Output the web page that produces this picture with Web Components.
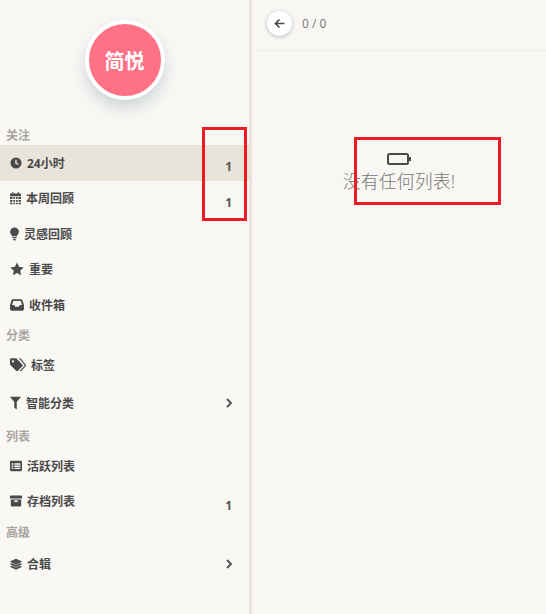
<!DOCTYPE html>
<html lang="zh">
<head>
<meta charset="utf-8">
<title>简悦</title>
<style>
  html, body { margin: 0; height: 100%; }
  body {
    background: #faf8f5;
    font-family: "Open Sans", "Noto Sans CJK SC", sans-serif;
    overflow: hidden;
  }
</style>
</head>
<body>
<app-shell>
  <side-nav slot="side">
    <logo-badge>简悦</logo-badge>
    <nav-label>关注</nav-label>
    <nav-item icon="clock" count="1" active>24小时</nav-item>
    <nav-item icon="calendar" count="1">本周回顾</nav-item>
    <nav-item icon="bulb">灵感回顾</nav-item>
    <nav-item icon="star">重要</nav-item>
    <nav-item icon="inbox">收件箱</nav-item>
    <nav-label style="margin-top:2.5px">分类</nav-label>
    <nav-item icon="tags" style="margin-top:2px">标签</nav-item>
    <nav-item icon="filter" arrow style="margin-top:3px">智能分类</nav-item>
    <nav-label style="margin-top:5px">列表</nav-label>
    <nav-item icon="list" style="margin-top:2px">活跃列表</nav-item>
    <nav-item icon="archive" count="1">存档列表</nav-item>
    <nav-label style="margin-top:3px">高级</nav-label>
    <nav-item icon="layers" arrow style="margin-top:4px">合辑</nav-item>
  </side-nav>
  <top-bar>0 / 0</top-bar>
  <empty-state>没有任何列表!</empty-state>
</app-shell>
<mark-box style="left:202px;top:127px;width:45px;height:94px"></mark-box>
<mark-box style="left:354px;top:137px;width:147px;height:68px"></mark-box>

<script>
const ICONS = {
  clock: { w: 12, vb: '0 0 16 16', d: 'M8 .6a7.4 7.4 0 1 0 0 14.8A7.4 7.4 0 0 0 8 .6zM7 3.6h1.9v4l2.7 1.7-1 1.5L7 8.6z' },
  calendar: { w: 11, vb: '0 0 13 15', d: 'M0 2.2h2.4V.6h1.6v1.6h5V.6h1.6v1.6H13v3.2H0zM0 6.4h3v2.4H0zM4 6.4h2v2.4H4zM7 6.4h2v2.4H7zM10 6.4h3v2.4h-3zM0 9.8h3v2.2H0zM4 9.8h2V12H4zM7 9.8h2V12H7zM10 9.8h3V12h-3zM0 13h3v2H1a1 1 0 0 1-1-1zM4 13h2v2H4zM7 13h2v2H7zM10 13h3v1a1 1 0 0 1-1 1h-2z' },
  bulb: { w: 9, vb: '0 0 11 16', d: 'M5.5 0a5.4 5.4 0 0 0-5.4 5.4c0 2.2 1.8 3.4 2.4 5.4h6c.6-2 2.4-3.2 2.4-5.4A5.4 5.4 0 0 0 5.5 0zM3 11.8h5v1.4H3zM3.6 14h3.8L6.4 16H4.6z' },
  star: { w: 14, vb: '0 0 16 16', d: 'M8 .6l2.3 4.9 5.3.7-3.9 3.7 1 5.3L8 12.7l-4.7 2.5 1-5.3L.4 6.2l5.3-.7z' },
  inbox: { w: 14, vb: '0 0 16 13', d: 'M3.2 0h9.6c.6 0 1 .3 1.3.8L16 6.6V11c0 1.1-.9 2-2 2H2c-1.100 0-2-.9-2-2V6.600L1.900.8C2.200.3 2.600 0 3.200 0zM3.800 2L2.300 6.500H5l1 2h4l1-2h2.700L12.200 2z' },
  tags: { w: 16, vb: '0 0 18 15', d: 'M0 1.400C0 .6.600 0 1.400 0h5c.5 0 .9.200 1.200.5l6.300 6.300c.6.600.6 1.500 0 2.100l-5 5c-.6.600-1.500.600-2.100 0L.5 7.600C.2 7.300 0 6.900 0 6.400zM3.400 2.200a1.300 1.300 0 1 0 0 2.600 1.300 1.300 0 0 0 0-2.600zM10 0h1.300c.4 0 .8.200 1.100.5l5.200 6.300c.6.600.6 1.500 0 2.100l-4.700 5c-.6.600-1.400.600-2 .1l5-5.200c.6-.6.600-1.500 0-2.100z' },
  filter: { w: 11, vb: '0 0 13 15', d: 'M.2 0h12.600c.2 0 .3.300.1.500L8 6v8.600c0 .3-.3.500-.6.300L5.200 13c-.1-.1-.2-.2-.2-.4V6L.1.500C-.1.300 0 0 .2 0z' },
  list: { w: 12, vb: '0 0 15 13', d: 'M1.500 0h12c.8 0 1.500.7 1.500 1.500v10c0 .8-.7 1.500-1.500 1.500h-12C.7 13 0 12.300 0 11.500v-10C0 .7.700 0 1.500 0zM2 3v1.800h2.200V3zM5.500 3v1.800H13V3zM2 5.800v1.800h2.200V5.800zM5.500 5.800v1.800H13V5.800zM2 8.600v1.800h2.200V8.600zM5.500 8.600v1.800H13V8.600z' },
  archive: { w: 12, vb: '0 0 15 14', d: 'M.7 0h13.600c.4 0 .7.300.7.700v2.600c0 .4-.3.700-.7.700H.7C.3 4 0 3.700 0 3.300V.7C0 .3.300 0 .7 0zM1 5h13v8c0 .6-.4 1-1 1H2c-.6 0-1-.4-1-1zM5.800 6.500c-.3 0-.5.200-.5.500v.6c0 .3.200.5.500.5h3.400c.3 0 .5-.2.500-.5V7c0-.3-.2-.5-.5-.5z' },
  layers: { w: 12, vb: '0 0 16 14', d: 'M8 0l7.500 3.400c.4.200.4.700 0 .9L8 7.700.5 4.300c-.4-.2-.4-.7 0-.9zM2.400 5.900L8 8.400l5.600-2.500 1.900.9c.4.200.4.700 0 .9L8 11.100.5 7.700c-.4-.2-.4-.7 0-.9zM2.400 9.300L8 11.800l5.600-2.500 1.900.9c.4.200.4.700 0 .9L8 14.500.5 11.100c-.4-.2-.4-.7 0-.9z' }
};

// frame for everything else, nav on the left
class AppShell extends HTMLElement {
  constructor() {
    super();
    this.attachShadow({ mode: 'open' }).innerHTML = `
      <style>
        :host { display: flex; height: 614px; background: #f9f7f4; }
        .side { flex: 0 0 249px; background: #faf8f5; border-right: 3px solid #e8e4da; }
        .main { flex: 1; min-width: 0; display: flex; flex-direction: column; }
      </style>
      <div class="side"><slot name="side"></slot></div>
      <div class="main"><slot></slot></div>`;
  }
}

class SideNav extends HTMLElement {
  constructor() {
    super();
    this.attachShadow({ mode: 'open' }).innerHTML = `
      <style>
        :host { display: flex; flex-direction: column; color: #4a4a4a; }
      </style>
      <slot></slot>`;
  }
}

class LogoBadge extends HTMLElement {
  constructor() {
    super();
    this.attachShadow({ mode: 'open' }).innerHTML = `
      <style>
        :host { display: flex; justify-content: center; height: 125px; padding-top: 20px; box-sizing: border-box; }
        .disc {
          width: 80px; height: 80px; box-sizing: border-box;
          display: flex; align-items: center; justify-content: center;
          border: 4px solid #fff; border-radius: 50%;
          background: #ff7285; color: #fff;
          font: 700 20px "Noto Sans CJK SC", sans-serif;
          box-shadow: 0 8px 16px rgba(120,145,160,.35);
        }
      </style>
      <div class="disc"><slot></slot></div>`;
  }
}

class NavLabel extends HTMLElement {
  constructor() {
    super();
    this.attachShadow({ mode: 'open' }).innerHTML = `
      <style>
        :host {
          display: flex; align-items: center; height: 20px; padding-left: 6px;
          font: 700 12px "Open Sans", "Noto Sans CJK SC", sans-serif; color: #a8a59f;
        }
      </style>
      <slot></slot>`;
  }
}

class NavItem extends HTMLElement {
  constructor() {
    super();
    const icon = ICONS[this.getAttribute('icon')];
    const count = this.getAttribute('count');
    this.attachShadow({ mode: 'open' }).innerHTML = `
      <style>
        :host {
          display: flex; align-items: center; height: 35.5px; padding: 0 16px 0 10px;
          font: 700 12px "Open Sans", "Noto Sans CJK SC", sans-serif; color: #4a4a4a;
        }
        :host([active]) { background: #e8e4da; }
        svg.icon { flex: none; margin-right: 5px; fill: currentColor; }
        .text { flex: 1; }
        .count { position: relative; top: 4px; margin-right: 1px; font: 700 12px "Open Sans", sans-serif; color: #555; }
        .arrow { width: 8px; height: 10px; fill: none; stroke: #555; stroke-width: 2; }
      </style>
      <svg class="icon" width="${icon.w}" height="14" viewBox="${icon.vb}"><path fill-rule="evenodd" d="${icon.d}"/></svg>
      <span class="text"><slot></slot></span>
      ${count ? `<span class="count">${count}</span>` : ''}
      ${this.hasAttribute('arrow') ? '<svg class="arrow" viewBox="0 0 8 10"><path d="M2 1l4 4-4 4"/></svg>' : ''}`;
  }
}

class TopBar extends HTMLElement {
  constructor() {
    super();
    this.attachShadow({ mode: 'open' }).innerHTML = `
      <style>
        :host {
          display: flex; align-items: center; gap: 10px; height: 51px; box-sizing: border-box;
          padding: 0 0 4px 15px; border-bottom: 1px solid #eeece8;
          font: 400 12px "Open Sans", sans-serif; color: #777;
        }
        button {
          display: flex; align-items: center; justify-content: center;
          width: 25px; height: 25px; padding: 0; border: 0; border-radius: 50%;
          background: #fff; box-shadow: 0 1px 4px rgba(0,0,0,.25);
        }
      </style>
      <button aria-label="back">
        <svg width="11" height="11" viewBox="0 0 11 11" fill="none" stroke="#4a4a4a" stroke-width="1.7"><path d="M10.500 5.500H1.500M5.500 1.500l-4 4 4 4"/></svg>
      </button>
      <span><slot></slot></span>`;
  }
}

class EmptyState extends HTMLElement {
  constructor() {
    super();
    this.attachShadow({ mode: 'open' }).innerHTML = `
      <style>
        :host {
          display: flex; flex-direction: column; align-items: center; padding-top: 102px;
          font: 300 18px "Open Sans", "Noto Sans CJK SC", sans-serif; color: #777;
        }
        svg { display: block; margin-bottom: 2px; }
      </style>
      <svg width="24" height="12" viewBox="0 0 24 12" fill="none">
        <rect x="1" y="1" width="20" height="10" rx="1.500" stroke="#4a4a4a" stroke-width="2"/>
        <rect x="22" y="4" width="2" height="4" fill="#4a4a4a"/>
      </svg>
      <span><slot></slot></span>`;
  }
}

// red annotation rectangles that lie over the page
class MarkBox extends HTMLElement {
  constructor() {
    super();
    this.attachShadow({ mode: 'open' }).innerHTML = `
      <style>
        :host { position: absolute; box-sizing: border-box; border: 3px solid #ed1c24; pointer-events: none; }
      </style>`;
  }
}

customElements.define('app-shell', AppShell);
customElements.define('side-nav', SideNav);
customElements.define('logo-badge', LogoBadge);
customElements.define('nav-label', NavLabel);
customElements.define('nav-item', NavItem);
customElements.define('top-bar', TopBar);
customElements.define('empty-state', EmptyState);
customElements.define('mark-box', MarkBox);
</script>
</body>
</html>
